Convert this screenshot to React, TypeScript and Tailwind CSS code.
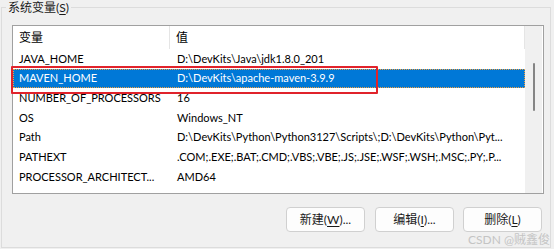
import React from 'react';

const rows = [
    { name: 'JAVA_HOME', value: 'D:\\DevKits\\Java\\jdk1.8.0_201' },
    { name: 'MAVEN_HOME', value: 'D:\\DevKits\\apache-maven-3.9.9', selected: true },
    { name: 'NUMBER_OF_PROCESSORS', value: '16' },
    { name: 'OS', value: 'Windows_NT' },
    { name: 'Path', value: 'D:\\DevKits\\Python\\Python3127\\Scripts\\;D:\\DevKits\\Python\\Pyt...' },
    { name: 'PATHEXT', value: '.COM;.EXE;.BAT;.CMD;.VBS;.VBE;.JS;.JSE;.WSF;.WSH;.MSC;.PY;.P...' },
    { name: 'PROCESSOR_ARCHITECT...', value: 'AMD64' },
];

function Button({ label, hotkey, suffix }: { label: string; hotkey: string; suffix?: string }) {
    return (
        <button className="w-[79px] h-[25px] bg-[#fdfdfd] border border-[#d0d0d0] rounded-[4px] text-[12px] text-[#1a1a1a] flex items-center justify-center">
            {label}(<span className="underline underline-offset-2">{hotkey}</span>){suffix}
        </button>
    );
}

export default function App() {
    return (
        <div
            className="relative w-[554px] h-[249px] bg-[#f0f0f0] overflow-hidden text-black"
            style={{ fontFamily: 'Lato, "Noto Sans CJK SC", sans-serif' }}
        >
            <div className="ml-[1px] mt-[7px] w-[550px] h-[241px] border border-[#dcdcdc] pl-[10px] pt-[17px]">
                <div className="w-[532px] h-[169px] border border-[#a0a0a0] bg-white flex">
                    <div className="w-[512px] flex flex-col text-[11px]">
                        <div className="h-[23px] flex items-center shrink-0 text-[12px]">
                            <div className="w-[157px] h-full border-r border-[#e5e5e5] pl-[6px] flex items-center">变量</div>
                            <div className="flex-1 h-full border-r border-[#e5e5e5] pl-[6px] flex items-center">值</div>
                        </div>
                        {rows.map((r) => (
                            <div
                                key={r.name}
                                className={`h-[19.67px] shrink-0 flex items-center whitespace-nowrap ${
                                    r.selected
                                        ? 'bg-[#0078d7] text-white border border-dotted border-[#f0a040]'
                                        : 'border border-transparent'
                                }`}
                            >
                                <div className="w-[157px] pl-[5px] overflow-hidden">{r.name}</div>
                                <div className="flex-1 pl-[6px] overflow-hidden">{r.value}</div>
                            </div>
                        ))}
                    </div>
                    <div className="w-[17px] h-full bg-[#f0f0f0] flex justify-center pt-[37px]">
                        <div className="w-[2px] h-[48px] rounded-full bg-[#858585]" />
                    </div>
                </div>
                <div className="mt-[13px] w-[530px] flex justify-end">
                    <div className="flex gap-[10px]">
                        <Button label="新建" hotkey="W" suffix="..." />
                        <Button label="编辑" hotkey="I" suffix="..." />
                    </div>
                    <div className="ml-[9px]">
                        <Button label="删除" hotkey="L" />
                    </div>
                </div>
            </div>

            <div className="absolute left-[6px] top-0 px-[2px] bg-[#f0f0f0] text-[12px] leading-[15px] text-[#1a1a1a]">
                系统变量(<span className="underline underline-offset-2">S</span>)
            </div>

            <div className="absolute left-[11px] top-[66px] w-[367px] h-[28px] border-2 border-[#e0232b] rounded-[1px]" />

            <div className="absolute right-[4px] bottom-[3px] text-[12px] text-[#c4c4c4] leading-none">
                CSDN @贼鑫俊
            </div>
        </div>
    );
}
